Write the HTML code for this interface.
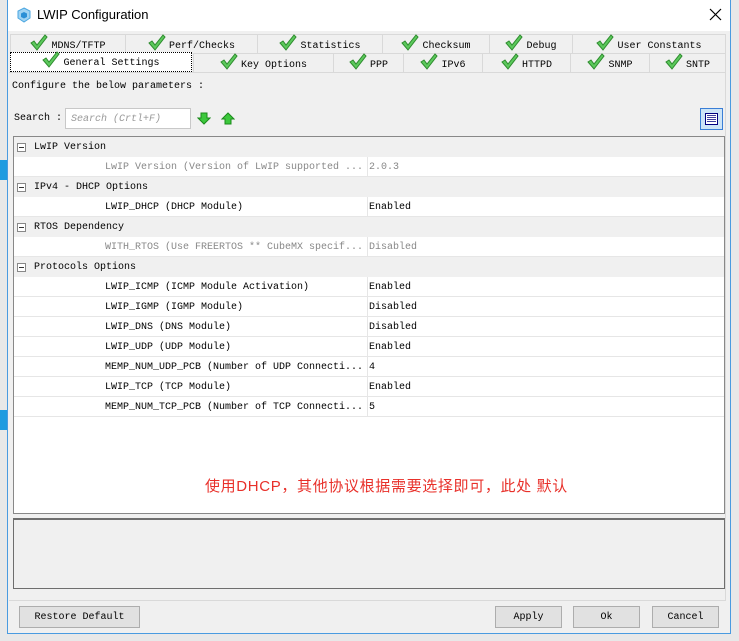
<!DOCTYPE html>
<html><head><meta charset="utf-8"><style>
*{box-sizing:border-box;margin:0;padding:0}
body{width:739px;height:641px;overflow:hidden;background:#e8e8e8;font-family:"Liberation Mono",monospace;font-size:10px;color:#000;position:relative}
.abs{position:absolute}
.win{left:7px;top:0;width:724px;height:634px;background:#f0f0f0;border:1px solid #4a9be0;border-top:none}
.title{left:0;top:0;width:722px;height:31px;background:#fff}
.tab{position:absolute;height:19px;background:#f0f0f0;border:1px solid #d9d9d9;border-bottom:none;display:flex;align-items:center;justify-content:center;white-space:nowrap;padding-top:5px}
.tab svg{margin-right:3px;margin-top:-8px}
.row{position:absolute;left:14px;width:710px;height:20px;line-height:20px;white-space:nowrap;padding-top:1px}
.hd{background:#f0f0f0}
.dt{background:#fff;border-bottom:1px solid #e6e6e6}
.btn{position:absolute;top:606px;height:22px;background:#e1e1e1;border:1px solid #adadad;text-align:center;line-height:22px}
.box{display:inline-block;width:9px;height:9px;border:1px solid #888;position:absolute;left:3px;top:6px;background:#fff}
.box:after{content:"";position:absolute;left:1px;top:3px;width:5px;height:1px;background:#333}
</style></head><body>
<div class="abs" style="left:0;top:160px;width:7px;height:20px;background:#1e9be0"></div>
<div class="abs" style="left:0;top:410px;width:7px;height:20px;background:#1e9be0"></div>
<div class="abs win"></div>
<div class="abs title" style="left:8px"></div>
<svg class="abs" style="left:16px;top:7px" width="16" height="16" viewBox="0 0 16 16"><path d="M8 1 L14 4 L14 11 L8 15 L2 11 L2 4Z" fill="#9fd3f3" stroke="#4aa6e0"/><path d="M8 5 L11 6.5 L11 10 L8 11.5 L5 10 L5 6.5Z" fill="#2a8fd6"/></svg>
<div class="abs" style="left:37px;top:7px;font-family:'Liberation Sans',sans-serif;font-size:13px">LWIP Configuration</div>
<svg class="abs" style="left:709px;top:8px" width="13" height="13"><path d="M1 1L12 12M12 1L1 12" stroke="#000" stroke-width="1.2"/></svg>

<svg width="0" height="0" style="position:absolute"><defs><g id="ck"><path d="M1 9 L4 7 L7 11 L15 1 L17 3 L7 16 Z" fill="#5cc95c" stroke="#2e8b2e" stroke-width="1"/></g></defs></svg>

<div class="tab" style="left:10px;top:34px;width:116px"><svg width="18" height="17"><use href="#ck"/></svg>MDNS/TFTP</div>
<div class="tab" style="left:125px;top:34px;width:133px"><svg width="18" height="17"><use href="#ck"/></svg>Perf/Checks</div>
<div class="tab" style="left:257px;top:34px;width:126px"><svg width="18" height="17"><use href="#ck"/></svg>Statistics</div>
<div class="tab" style="left:382px;top:34px;width:108px"><svg width="18" height="17"><use href="#ck"/></svg>Checksum</div>
<div class="tab" style="left:489px;top:34px;width:84px"><svg width="18" height="17"><use href="#ck"/></svg>Debug</div>
<div class="tab" style="left:572px;top:34px;width:154px"><svg width="18" height="17"><use href="#ck"/></svg>User Constants</div>

<div class="tab" style="left:10px;top:52px;width:182px;background:#fff;border:1px dotted #000;height:20px;padding-top:3px"><svg width="18" height="17"><use href="#ck"/></svg>General Settings</div>
<div class="tab" style="left:193px;top:53px;width:141px"><svg width="18" height="17"><use href="#ck"/></svg>Key Options</div>
<div class="tab" style="left:333px;top:53px;width:71px"><svg width="18" height="17"><use href="#ck"/></svg>PPP</div>
<div class="tab" style="left:403px;top:53px;width:80px"><svg width="18" height="17"><use href="#ck"/></svg>IPv6</div>
<div class="tab" style="left:482px;top:53px;width:89px"><svg width="18" height="17"><use href="#ck"/></svg>HTTPD</div>
<div class="tab" style="left:570px;top:53px;width:80px"><svg width="18" height="17"><use href="#ck"/></svg>SNMP</div>
<div class="tab" style="left:649px;top:53px;width:77px"><svg width="18" height="17"><use href="#ck"/></svg>SNTP</div>
<div class="abs" style="left:9px;top:72px;width:717px;height:1px;background:#d9d9d9"></div>
<div class="abs" style="left:725px;top:72px;width:1px;height:528px;background:#d9d9d9"></div>
<div class="abs" style="left:9px;top:600px;width:717px;height:1px;background:#d9d9d9"></div>

<div class="abs" style="left:12px;top:81px">Configure the below parameters :</div>
<div class="abs" style="left:14px;top:113px">Search :</div>
<div class="abs" style="left:65px;top:108px;width:126px;height:21px;background:#fff;border:1px solid #c8c8c8;color:#999;font-style:italic;padding:5px 0 0 5px">Search (Crtl+F)</div>
<svg class="abs" style="left:197px;top:112px" width="14" height="13"><path d="M4 1H10V6H13L7 12L1 6H4Z" fill="#3cc83c" stroke="#1a8a1a"/></svg>
<svg class="abs" style="left:221px;top:112px" width="14" height="13"><path d="M4 12H10V7H13L7 1L1 7H4Z" fill="#3cc83c" stroke="#1a8a1a"/></svg>
<div class="abs" style="left:700px;top:108px;width:23px;height:22px;background:#cce4f7;border:1px solid #3a7ed6"></div>
<svg class="abs" style="left:705px;top:113px" width="13" height="12"><rect x="0.5" y="0.5" width="12" height="11" fill="#fff" stroke="#000080"/><path d="M2 2.5H11M2 4.5H11M2 6.5H11M2 8.5H11" stroke="#000080" stroke-width="0.8"/></svg>

<div class="abs" style="left:13px;top:136px;width:712px;height:378px;background:#fff;border:1px solid #888"></div>
<div class="row hd" style="top:137px"><span class="box"></span><span style="position:absolute;left:20px">LwIP Version</span></div>
<div class="row dt" style="top:157px;color:#888"><span style="position:absolute;left:91px">LwIP Version (Version of LwIP supported ...</span><span style="position:absolute;left:355px">2.0.3</span></div>
<div class="row hd" style="top:177px"><span class="box"></span><span style="position:absolute;left:20px">IPv4 - DHCP Options</span></div>
<div class="row dt" style="top:197px"><span style="position:absolute;left:91px">LWIP_DHCP (DHCP Module)</span><span style="position:absolute;left:355px">Enabled</span></div>
<div class="row hd" style="top:217px"><span class="box"></span><span style="position:absolute;left:20px">RTOS Dependency</span></div>
<div class="row dt" style="top:237px;color:#888"><span style="position:absolute;left:91px">WITH_RTOS (Use FREERTOS ** CubeMX specif...</span><span style="position:absolute;left:355px">Disabled</span></div>
<div class="row hd" style="top:257px"><span class="box"></span><span style="position:absolute;left:20px">Protocols Options</span></div>
<div class="row dt" style="top:277px"><span style="position:absolute;left:91px">LWIP_ICMP (ICMP Module Activation)</span><span style="position:absolute;left:355px">Enabled</span></div>
<div class="row dt" style="top:297px"><span style="position:absolute;left:91px">LWIP_IGMP (IGMP Module)</span><span style="position:absolute;left:355px">Disabled</span></div>
<div class="row dt" style="top:317px"><span style="position:absolute;left:91px">LWIP_DNS (DNS Module)</span><span style="position:absolute;left:355px">Disabled</span></div>
<div class="row dt" style="top:337px"><span style="position:absolute;left:91px">LWIP_UDP (UDP Module)</span><span style="position:absolute;left:355px">Enabled</span></div>
<div class="row dt" style="top:357px"><span style="position:absolute;left:91px">MEMP_NUM_UDP_PCB (Number of UDP Connecti...</span><span style="position:absolute;left:355px">4</span></div>
<div class="row dt" style="top:377px"><span style="position:absolute;left:91px">LWIP_TCP (TCP Module)</span><span style="position:absolute;left:355px">Enabled</span></div>
<div class="row dt" style="top:397px"><span style="position:absolute;left:91px">MEMP_NUM_TCP_PCB (Number of TCP Connecti...</span><span style="position:absolute;left:355px">5</span></div>
<div class="abs" style="left:367px;top:157px;width:1px;height:20px;background:#e6e6e6"></div>
<div class="abs" style="left:367px;top:197px;width:1px;height:20px;background:#e6e6e6"></div>
<div class="abs" style="left:367px;top:237px;width:1px;height:20px;background:#e6e6e6"></div>
<div class="abs" style="left:367px;top:277px;width:1px;height:140px;background:#e6e6e6"></div>

<div class="abs" style="left:205px;top:475px;color:#e8302a;font-family:'Liberation Sans','Noto Sans CJK SC',sans-serif;font-size:15px;letter-spacing:0.65px;white-space:nowrap">使用DHCP，其他协议根据需要选择即可，此处 默认</div>

<div class="abs" style="left:13px;top:518px;width:712px;height:71px;background:#f0f0f0;border:1px solid #6e6e6e;border-top:2px solid #6e6e6e"></div>

<div class="btn" style="left:19px;width:121px">Restore Default</div>
<div class="btn" style="left:495px;width:67px">Apply</div>
<div class="btn" style="left:573px;width:67px">Ok</div>
<div class="btn" style="left:652px;width:67px">Cancel</div>
</body></html>
